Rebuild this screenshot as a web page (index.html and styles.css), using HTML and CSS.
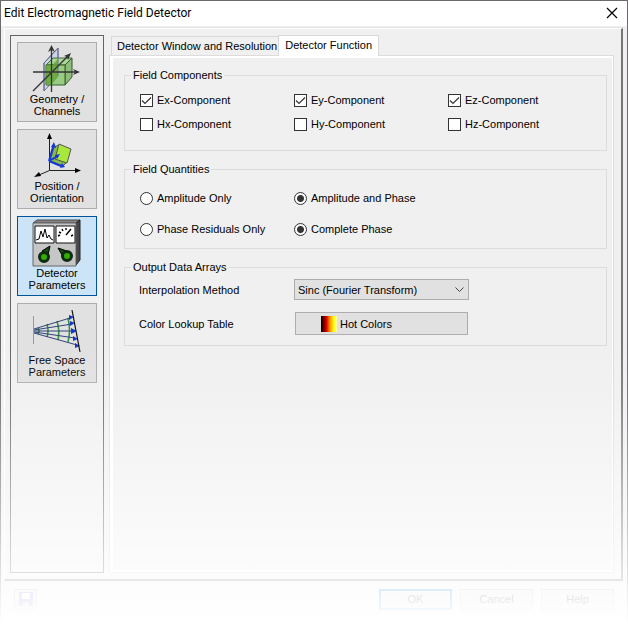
FILE: index.html
```html
<!DOCTYPE html>
<html lang="en">
<head>
    <meta charset="UTF-8">
    <meta name="viewport" content="width=device-width, initial-scale=1.0">
    <title>Edit Electromagnetic Field Detector</title>
    <link rel="stylesheet" href="styles.css">
</head>
<body>
    <div class="window">
        <header class="titlebar">
            <h1>Edit Electromagnetic Field Detector</h1>
            <button type="button" class="close" aria-label="Close">
                <svg width="12" height="12" viewBox="0 0 12 12"><path d="M1 1L11 11M11 1L1 11" stroke="#000" stroke-width="1.2"/></svg>
            </button>
        </header>

        <main class="frame">
            <nav class="sidebar">
                <button type="button" class="side-button">
                    <svg width="50" height="50" viewBox="0 0 50 50" fill="none">
                        <path d="M12 20L26 5V33L12 48Z" fill="#cdd5ea" stroke="#68718f"/>
                        <path d="M14 22L21 15H40L33 22Z" fill="#add79a" stroke="#456c35"/>
                        <path d="M33 22L40 15V34L33 42Z" fill="#8fbc7b" stroke="#345b28"/>
                        <path d="M14 22H33V42H14Z" fill="#9acb82" stroke="#35602a"/>
                        <path d="M14 22H20L26 16V34L19 42H14Z" fill="#63a333" fill-opacity=".8"/>
                        <path d="M12 48V20L26 5V33" stroke="#68718f"/>
                        <path d="M19.500 49V6M1 29H45M1 48L36 13" stroke="#333" stroke-width="1.3"/>
                        <path d="M19.500 2L23 9L19.500 7L16 9ZM48 29L41 26L43 29L41 32ZM39 10L36 17L35 14L32 13Z" fill="#333"/>
                    </svg>
                    <span>Geometry /<br>Channels</span>
                </button>
                <button type="button" class="side-button">
                    <svg width="50" height="50" viewBox="0 0 50 50" fill="none">
                        <path d="M17.500 6V40.500H43M17.500 40.500L7 45" stroke="#222"/>
                        <path d="M17.500 3L20 9H15ZM49 40.500L43 38V43ZM2 47L7 42L9 46Z" fill="#000"/>
                        <path d="M22 17L27 15L24 29L35 32L31 36L18 31Z" fill="#86b94b" stroke="#555"/>
                        <path d="M27 14L39 19L35 33L23 29Z" fill="#a8e83c" stroke="#555"/>
                        <path d="M17 31L21 17M17 31L26 26M17 31L29 36" stroke="#1337d8" stroke-width="2"/>
                        <path d="M22 12L24 18L19 17ZM28 24L25 29L23 25ZM33 37L28 38L30 33Z" fill="#1337d8"/>
                    </svg>
                    <span>Position /<br>Orientation</span>
                </button>
                <button type="button" class="side-button selected">
                    <svg width="50" height="50" viewBox="0 0 50 50" fill="none">
                        <path d="M1 6L5 3H48L44 6Z" fill="#888" stroke="#444"/>
                        <path d="M44 6L48 3V43L44 48Z" fill="#484848" stroke="#222"/>
                        <path d="M1 6H44V49H1Z" fill="#c6c6c6" stroke="#666"/>
                        <path d="M3 9H22V26H3ZM24 9H43V26H24Z" fill="#fff" stroke="#111"/>
                        <path d="M4 23L7 22L9 14L11 20L13 12L15 21L17 18L19 22L21 23" stroke="#000"/>
                        <path d="M26 19L28 18M27 15L29 16M30 12L31 14M34 11V13M39 12L34 18M39 19L41 18" stroke="#000" stroke-width="1.4"/>
                        <path d="M10 34L18 29L16 38ZM26 31L35 34L30 38Z" fill="#164b16" stroke="#000"/>
                        <circle cx="12" cy="40" r="4.500" fill="#2eae00" stroke="#102a10" stroke-width="3"/>
                        <circle cx="35" cy="39" r="4.500" fill="#2eae00" stroke="#102a10" stroke-width="3"/>
                    </svg>
                    <span>Detector<br>Parameters</span>
                </button>
                <button type="button" class="side-button">
                    <svg width="50" height="50" viewBox="0 0 50 50" fill="none">
                        <path d="M1.500 12V40" stroke="#999"/>
                        <path d="M6 24Q8 27 6 30M15 20Q17 27 15 33M25 17Q28 27 26 36M36 14Q39 27 36 38" stroke="#359344" stroke-width="1.6"/>
                        <path d="M2 25L38 14M2 26L40 20M2 27H41M2 28L43 34M2 29L45 41" stroke="#334478"/>
                        <path d="M42 13L37 11V16ZM43 19L38 17V22ZM45 27L39 24V30ZM46 35L41 32V37ZM48 42L43 39V44Z" fill="#133ac3"/>
                        <path d="M40 6L48 48" stroke="#111" stroke-width="1.2"/>
                    </svg>
                    <span>Free Space<br>Parameters</span>
                </button>
            </nav>

            <section class="content">
                <div class="tabs" role="tablist">
                    <button type="button" class="tab" role="tab" aria-selected="false">Detector Window and Resolution</button>
                    <button type="button" class="tab active" role="tab" aria-selected="true">Detector Function</button>
                </div>
                <div class="panel" role="tabpanel">
                    <fieldset class="components">
                        <legend>Field Components</legend>
                        <div class="options">
                            <label><input type="checkbox" checked>Ex-Component</label>
                            <label><input type="checkbox" checked>Ey-Component</label>
                            <label><input type="checkbox" checked>Ez-Component</label>
                            <label><input type="checkbox">Hx-Component</label>
                            <label><input type="checkbox">Hy-Component</label>
                            <label><input type="checkbox">Hz-Component</label>
                        </div>
                    </fieldset>

                    <fieldset class="quantities">
                        <legend>Field Quantities</legend>
                        <div class="options">
                            <label><input type="radio" name="quantity">Amplitude Only</label>
                            <label><input type="radio" name="quantity" checked>Amplitude and Phase</label>
                            <label><input type="radio" name="phase">Phase Residuals Only</label>
                            <label><input type="radio" name="phase" checked>Complete Phase</label>
                        </div>
                    </fieldset>

                    <fieldset class="output">
                        <legend>Output Data Arrays</legend>
                        <div class="settings">
                            <label for="interpolation">Interpolation Method</label>
                            <select id="interpolation">
                                <option>Sinc (Fourier Transform)</option>
                            </select>
                            <label for="lookup">Color Lookup Table</label>
                            <button type="button" id="lookup" class="lookup"><span class="swatch"></span>Hot Colors</button>
                        </div>
                    </fieldset>
                </div>
            </section>
        </main>

        <footer class="actions">
            <button type="button" class="save" aria-label="Save">
                <svg width="14" height="14" viewBox="0 0 14 14"><path d="M0 0H14V14H1L0 13Z" fill="#6f79cc"/><path d="M3 1H11V7H3Z" fill="#fff"/><path d="M4 10H10V14H4Z" fill="#bbb"/><path d="M7 11H9V13H7Z" fill="#fff"/></svg>
            </button>
            <button type="button" class="default">OK</button>
            <button type="button">Cancel</button>
            <button type="button">Help</button>
        </footer>
    </div>
</body>
</html>
```
FILE: styles.css
```css
* {
    box-sizing: border-box;
}
body {
    margin: 0;
    background: #fff;
    color: #000;
    font: 11px/12px "Liberation Sans", Arial, sans-serif;
}
button, select {
    font: inherit;
    color: inherit;
    border: 1px solid #adadad;
    border-radius: 0;
    background: #e1e1e1;
}
.window {
    position: relative;
    display: flex;
    flex-direction: column;
    min-height: 100vh;
    border: 1px solid #6b696b;
    border-bottom: 0;
    background: #f0f0f0;
}
/* Fades the lower part of the dialog out to white */
.window::after {
    content: "";
    position: absolute;
    inset: 55% -1px 0;
    background: linear-gradient(rgba(255, 255, 255, 0), rgba(255, 255, 255, 0.12) 20%, rgba(255, 255, 255, 0.78) 80%, rgba(255, 255, 255, 0.9) 91%, #fff);
    pointer-events: none;
}
.titlebar {
    display: flex;
    justify-content: space-between;
    align-items: center;
    height: 25px;
    padding: 0 9px 2px 3px;
    background: #fff;
}
.titlebar h1 {
    margin: 0;
    font: 12px/16px Roboto, "Noto Sans", sans-serif;
}
.close {
    display: flex;
    padding: 0;
    border: 0;
    background: none;
}

.frame {
    flex: 1;
    display: flex;
    gap: 5px;
    margin: 2px 4px 0 3px;
    padding: 6px 7px 6px 5px;
    border: 1px solid #fff;
    border-right: 2px solid #777;
    border-bottom: 2px solid #777;
    box-shadow: 0 -1px #e3e3e3;
}
.sidebar {
    display: flex;
    flex-direction: column;
    gap: 7px;
    padding: 6px;
    border: 1px solid #646464;
}
.side-button {
    display: flex;
    flex-direction: column;
    align-items: center;
    width: 80px;
    height: 80px;
    padding: 0;
    text-align: center;
}
.side-button.selected {
    border-color: #005499;
    background: #cce4f7;
}

.content {
    flex: 1;
    display: flex;
    flex-direction: column;
    min-width: 0;
}
.tabs {
    display: flex;
    align-items: flex-end;
    padding-left: 2px;
}
.tab {
    height: 19px;
    padding: 0 1px 0 5px;
    border-color: #d9d9d9;
    border-bottom: 0;
    background: #f0f0f0;
    white-space: nowrap;
}
.tab.active {
    z-index: 1;
    height: 21px;
    margin: 0 0 -1px -1px;
    padding: 0 6px 2px;
    background: #fff;
}
.panel {
    flex: 1;
    padding: 13px 6px 0 14px;
    border: 1px solid #dcdcdc;
    box-shadow: inset 1px 0 0 2px #fff;
}

fieldset {
    min-width: 0;
    margin: 0 0 12px;
    padding: 0 14px;
    border: 1px solid #dcdcdc;
}
legend {
    margin-left: -8px;
    padding: 0 2px;
}
.components {
    height: 82px;
}
.quantities {
    height: 86px;
}
.output {
    height: 85px;
}
.options {
    display: grid;
    grid-template-columns: 154px 154px 1fr;
    row-gap: 10px;
    padding: 12px 0 0 1px;
}
.quantities .options {
    grid-template-columns: 154px 1fr;
    row-gap: 17px;
    padding-top: 16px;
}
.options label {
    display: flex;
    align-items: center;
    gap: 4px;
    height: 14px;
}
.options input {
    appearance: none;
    width: 13px;
    height: 13px;
    margin: 0;
    border: 1px solid #333;
    background: #fff;
}
.options input[type="checkbox"]:checked {
    background: #fff url('data:image/svg+xml,<svg xmlns="http://www.w3.org/2000/svg" viewBox="0 0 11 11"><path d="M1 5.5L4 8.5L10 2.5" fill="none" stroke="%23333" stroke-width="1.2"/></svg>');
}
.options input[type="radio"] {
    border-radius: 50%;
}
.options input[type="radio"]:checked {
    background: radial-gradient(circle, #333 3px, #fff 4px);
}

.settings {
    display: grid;
    grid-template-columns: 155px 175px;
    row-gap: 12px;
    align-items: center;
    padding-top: 6px;
}
.settings select {
    appearance: none;
    height: 21px;
    padding: 0 20px 0 3px;
    background: #e1e1e1 url('data:image/svg+xml,<svg xmlns="http://www.w3.org/2000/svg" width="9" height="6" viewBox="0 0 9 6"><path d="M.5 .5L4.500 4.500L8.500 .5" fill="none" stroke="%23444"/></svg>') no-repeat right 4px center;
}
.lookup {
    display: flex;
    align-items: center;
    gap: 3px;
    height: 23px;
    margin: 0 1px;
    padding: 0 25px;
}
.swatch {
    width: 16px;
    height: 16px;
    background: linear-gradient(90deg, #000, #e00000 35%, #ff9000 55%, #ffff00 80%, #ffffc0);
}

.actions {
    display: flex;
    gap: 8px;
    height: 43px;
    padding: 8px 13px 0;
}
.actions button {
    width: 73px;
    height: 21px;
    padding: 0 0 1px;
}
.actions .default {
    border: 2px solid #0078d7;
}
.actions .save {
    display: flex;
    align-items: center;
    justify-content: center;
    width: 23px;
    margin-right: auto;
}
```
